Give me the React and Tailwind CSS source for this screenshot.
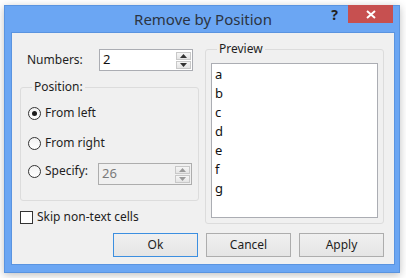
import React from 'react';

const font = { fontFamily: '"Noto Sans", "Open Sans", sans-serif' };

const Spin = ({ disabled }) => (
  <div className="flex flex-col w-[15px] h-[17px] gap-[1px]">
    {['up', 'down'].map(d => (
      <div
        key={d}
        className="flex-1 flex items-center justify-center border border-[#c8c8c8] bg-gradient-to-b from-[#f6f6f6] to-[#e4e4e4]"
      >
        <svg width="7" height="4" viewBox="0 0 7 4">
          {d === 'up' ? (
            <polygon points="3.5,0 7,4 0,4" fill={disabled ? '#9a9a9a' : '#333'} />
          ) : (
            <polygon points="0,0 7,0 3.5,4" fill={disabled ? '#9a9a9a' : '#333'} />
          )}
        </svg>
      </div>
    ))}
  </div>
);

const Radio = ({ checked, label }) => (
  <div className="flex items-center gap-[4px] h-[20px]">
    <div className="w-[13px] h-[13px] rounded-full border border-[#333] bg-gradient-to-b from-[#f2f2f2] to-white flex items-center justify-center">
      {checked && <div className="w-[5px] h-[5px] rounded-full bg-[#1c1c1c]" />}
    </div>
    <span className="text-[12px] leading-[16px] text-[#1e1e1e]">{label}</span>
  </div>
);

const Button = ({ children, primary }) => (
  <button
    className={`w-[85px] h-[24px] border text-[12px] text-[#1e1e1e] bg-gradient-to-b from-[#f0f0f0] to-[#e5e5e5] ${
      primary ? 'border-[#3c8fe0]' : 'border-[#adadad]'
    }`}
  >
    {children}
  </button>
);

export default function App() {
  return (
    <div className="w-[406px] h-[278px] bg-white overflow-hidden relative" style={font}>
      <div className="pl-[4px] pt-[5px]">
        <div className="w-[396px] h-[268px] bg-[#6ba6f3] border border-[#5a94e0] shadow-[0_2px_8px_rgba(0,0,0,0.25)] flex flex-col pl-[6px] pr-[4px] pb-[7px]">
          {/* title bar */}
          <div className="h-[26px] flex items-start relative">
            <div className="flex-1 text-center text-[15px] leading-[24px] text-[#2b3442] pt-[1px]">Remove by Position</div>
            <div className="absolute right-[57px] top-[-2px] text-[14px] font-bold text-[#222]">?</div>
            <div className="absolute right-[2px] top-[-1px] w-[45px] h-[18px] bg-[#c75050] flex items-center justify-center">
              <svg width="10" height="9" viewBox="0 0 10 9">
                <path d="M1 1 L9 8 M9 1 L1 8" stroke="white" strokeWidth="2" />
              </svg>
            </div>
          </div>

          {/* client */}
          <div className="flex-1 bg-[#f0f0f0] border border-[#5a94e0] flex flex-col pt-[8px] pb-[6px]">
            <div className="flex pl-[8px] gap-[6px]">
              {/* left column */}
              <div className="w-[179px] flex flex-col pt-[8px]">
                <div className="flex items-center h-[22px]">
                  <span className="ml-[7px] w-[72px] text-[12px] text-[#1e1e1e]">Numbers:</span>
                  <div className="w-[94px] h-[22px] bg-white border border-[#abadb3] flex items-center justify-between pl-[3px] pr-[1px]">
                    <span className="text-[13px] text-[#111]">2</span>
                    <Spin />
                  </div>
                </div>
                <fieldset className="mt-[8px] border border-[#dcdcdc] rounded-[3px] pl-[7px] pt-[8px] pb-[12px] h-[122px]">
                  <legend className="ml-[4px] px-[2px] text-[12px] leading-[16px] text-[#1e1e1e]">Position:</legend>
                  <div className="flex flex-col gap-[10px]">
                    <Radio checked label="From left" />
                    <Radio label="From right" />
                    <div className="flex items-start">
                      <div className="mt-[-2px] w-[70px]">
                        <Radio label="Specify:" />
                      </div>
                      <div className="w-[94px] h-[22px] bg-[#f0f0f0] border border-[#adadad] flex items-center justify-between pl-[3px] pr-[1px]">
                        <span className="text-[13px] text-[#7a7a7a]">26</span>
                        <Spin disabled />
                      </div>
                    </div>
                  </div>
                </fieldset>
                <div className="flex items-center gap-[4px] mt-[8px] h-[16px]">
                  <div className="w-[13px] h-[13px] border border-[#333] bg-white" />
                  <span className="text-[12px] text-[#1e1e1e]">Skip non-text cells</span>
                </div>
              </div>

              {/* right column */}
              <fieldset className="w-[179px] h-[183px] border border-[#dcdcdc] rounded-[3px] px-[5px] pt-[6px] pb-[5px]">
                <legend className="ml-[6px] px-[2px] text-[12px] leading-[16px] text-[#1e1e1e]">Preview</legend>
                <div className="h-full bg-white border border-[#abadb3] pl-[3px] pt-[1px]">
                  {['a', 'b', 'c', 'd', 'e', 'f', 'g'].map(c => (
                    <div key={c} className="text-[13px] leading-[19px] text-[#111]">{c}</div>
                  ))}
                </div>
              </fieldset>
            </div>

            <div className="flex justify-end gap-[8px] pr-[10px] mt-[8px]">
              <Button primary>Ok</Button>
              <Button>Cancel</Button>
              <Button>Apply</Button>
            </div>
          </div>
        </div>
      </div>
    </div>
  );
}
